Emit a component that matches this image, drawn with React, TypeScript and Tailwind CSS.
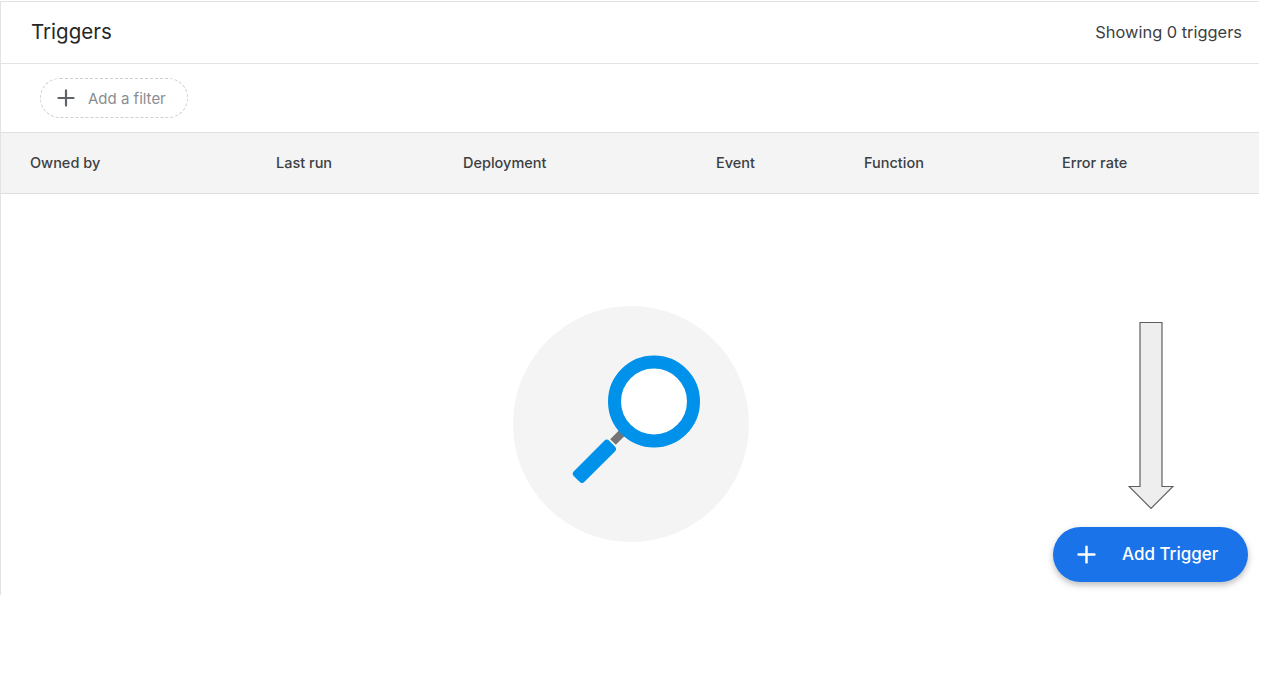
import { Plus } from 'lucide-react';

const columns = ['Owned by', 'Last run', 'Deployment', 'Event', 'Function', 'Error rate'];

function EmptyIllustration() {
  return (
    <div className="w-[236px] h-[236px] rounded-full bg-[#f4f4f4] mt-[112px] ml-[512px]">
      <svg viewBox="0 0 236 236" className="w-full h-full">
        <circle cx="141" cy="95.5" r="33" fill="#ffffff" />
        <path d="M100 136 L110 126" stroke="#757575" strokeWidth="8" />
        <rect x="56.4" y="147.8" width="50" height="15" rx="3.5" fill="#0091ea" transform="rotate(-45 81.4 155.3)" />
        <circle cx="141" cy="95.5" r="39.5" fill="none" stroke="#0091ea" strokeWidth="13" />
      </svg>
    </div>
  );
}

function DownArrow() {
  return (
    <svg viewBox="0 0 46 189" className="absolute left-[1128px] top-[321px] w-[46px] h-[189px]">
      <path
        d="M12 1.5 H34 V165.5 H45 L23 187.5 L1 165.5 H12 Z"
        fill="#eeeeee"
        stroke="#5f5f5f"
        strokeWidth="1.2"
      />
    </svg>
  );
}

export default function App() {
  return (
    <div className="relative w-[1278px] h-[694px] bg-white overflow-hidden font-['Inter',sans-serif]">
      <div className="w-[1259px] h-[594px] mt-px border-t border-l border-[#e3e3e3] box-border absolute left-0 top-0">
        <div className="h-[62px] flex items-center justify-between border-b border-[#e3e3e3] pl-[30px] pr-[17px]">
          <h1 className="text-[20.5px] font-normal text-[#262626]">Triggers</h1>
          <span className="text-[16.4px] text-[#3c4043]">Showing 0 triggers</span>
        </div>
        <div className="h-[68px] flex items-center pl-[39px]">
          <div className="w-[148px] h-[40px] flex items-center gap-[9px] pl-[12px] rounded-full border border-dashed border-[#cfcfcf]">
            <Plus className="w-[26px] h-[26px] text-[#5f6368]" strokeWidth={2} />
            <span className="text-[15px] leading-[22px] mt-px text-[#8a8d91]">Add a filter</span>
          </div>
        </div>
        <div className="h-[62px] grid grid-cols-[246px_187px_253px_148px_198px_1fr] items-center pl-[29px] bg-[#f4f4f4] border-y border-[#e0e0e0] box-border">
          {columns.map((c) => (
            <span key={c} className="text-[14.5px] font-medium text-[#3c4043]">
              {c}
            </span>
          ))}
        </div>
        <EmptyIllustration />
      </div>
      <DownArrow />
      <button
        type="button"
        className="absolute left-[1053px] top-[527px] w-[195px] h-[55px] rounded-full bg-[#1a73e8] text-white flex items-center pl-[20px] gap-[22px] shadow-[0_3px_6px_rgba(60,64,67,0.35)]"
      >
        <Plus className="w-[27px] h-[27px]" strokeWidth={2.2} />
        <span className="text-[17px] font-medium">Add Trigger</span>
      </button>
    </div>
  );
}
